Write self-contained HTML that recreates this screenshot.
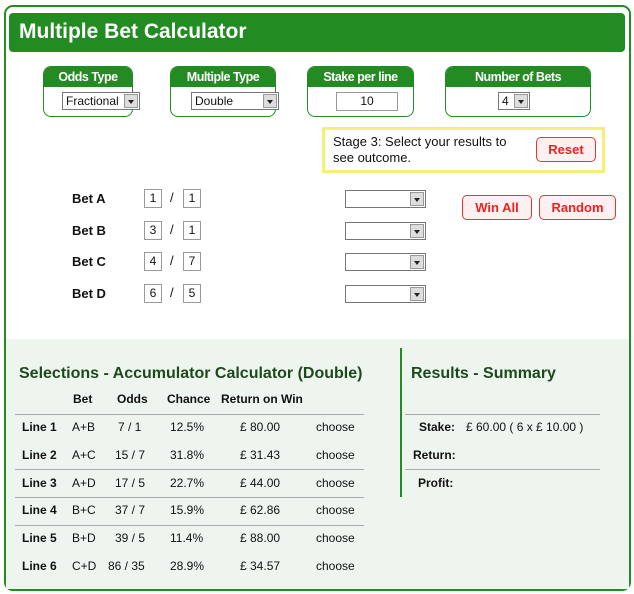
<!DOCTYPE html>
<html><head><style>
*{margin:0;padding:0;box-sizing:border-box}
body{width:634px;height:594px;background:#fff;font-family:"Liberation Sans",sans-serif;position:relative;overflow:hidden;font-size:13px;color:#111}
.a{position:absolute}
#outer{left:4px;top:5px;width:627px;height:586px;border:2px solid #228b22;border-radius:9px;overflow:hidden}
#hdr{left:9px;top:13px;width:616px;height:39px;background:#228b22;border-radius:4px;color:#fff;font-size:21px;font-weight:bold;padding:7px 0 0 10px}
#low{left:6px;top:339px;width:623px;height:250px;background:#eef5ee}
.box{border:1px solid #228b22;border-radius:8px;background:#fff;overflow:hidden}
.box .h{background:#228b22;color:#fff;font-weight:bold;font-size:12.5px;text-align:center;height:20px;line-height:20px;letter-spacing:-0.5px}
.sel{position:absolute;height:18px;border:1px solid #777;background:#fff;font-size:12px;line-height:16px;padding-left:3px}
.sel i{position:absolute;right:1px;top:1px;width:14px;height:14px;background:#ddd;border:1px solid #999}
.sel i:after{content:"";position:absolute;left:3px;top:5px;border-left:3.5px solid transparent;border-right:3.5px solid transparent;border-top:4px solid #222}
.inp{position:absolute;width:18px;height:19px;border:1px solid #999;background:#fff;font-size:12px;text-align:center;line-height:17px}
.btn{position:absolute;height:25px;border:1px solid #e33;border-radius:5px;background:#fdf0f0;color:#e22;font-weight:bold;font-size:13px;text-align:center;line-height:23px}
.bl{font-weight:bold;font-size:13px}
.t{position:absolute;font-size:12px}
.b{font-weight:bold}
.ln{position:absolute;height:1px;background:#aaa}
</style></head><body>
<div id="outer" class="a"></div>
<div id="low" class="a"></div>
<div id="hdr" class="a">Multiple Bet Calculator</div>

<div class="a box" style="left:43px;top:66px;width:90px;height:51px"><div class="h">Odds Type</div></div>
<div class="sel" style="left:62px;top:92px;width:78px">Fractional<i></i></div>
<div class="a box" style="left:170px;top:66px;width:106px;height:51px"><div class="h">Multiple Type</div></div>
<div class="sel" style="left:191px;top:92px;width:88px">Double<i></i></div>
<div class="a box" style="left:307px;top:66px;width:107px;height:51px"><div class="h">Stake per line</div></div>
<div class="a" style="left:336px;top:92px;width:62px;height:19px;border:1px solid #999;background:#fff;text-align:center;font-size:12px;line-height:17px">10</div>
<div class="a box" style="left:445px;top:66px;width:146px;height:51px"><div class="h">Number of Bets</div></div>
<div class="sel" style="left:498px;top:92px;width:32px">4<i></i></div>

<div class="a" style="left:322px;top:127px;width:283px;height:46px;border:3px solid #f5f075;background:#fff;font-size:13px;line-height:16px;padding:4px 0 0 8px">Stage 3: Select your results to<br>see outcome.</div>
<div class="btn" style="left:536px;top:137px;width:60px">Reset</div>

<div class="a bl" style="left:72px;top:191px">Bet A</div>
<div class="a bl" style="left:72px;top:223px">Bet B</div>
<div class="a bl" style="left:72px;top:254px">Bet C</div>
<div class="a bl" style="left:72px;top:286px">Bet D</div>
<div class="inp" style="left:144px;top:189px">1</div><div class="a" style="left:170px;top:190px">/</div><div class="inp" style="left:183px;top:189px">1</div>
<div class="inp" style="left:144px;top:221px">3</div><div class="a" style="left:170px;top:222px">/</div><div class="inp" style="left:183px;top:221px">1</div>
<div class="inp" style="left:144px;top:252px">4</div><div class="a" style="left:170px;top:253px">/</div><div class="inp" style="left:183px;top:252px">7</div>
<div class="inp" style="left:144px;top:284px">6</div><div class="a" style="left:170px;top:285px">/</div><div class="inp" style="left:183px;top:284px">5</div>
<div class="sel" style="left:345px;top:190px;width:81px"><i></i></div>
<div class="sel" style="left:345px;top:222px;width:81px"><i></i></div>
<div class="sel" style="left:345px;top:253px;width:81px"><i></i></div>
<div class="sel" style="left:345px;top:285px;width:81px"><i></i></div>
<div class="btn" style="left:462px;top:195px;width:70px">Win All</div>
<div class="btn" style="left:539px;top:195px;width:77px">Random</div>

<div class="a" style="left:19px;top:365px;font-size:16px;font-weight:bold;color:#1d4a1d">Selections - Accumulator Calculator (Double)</div>
<div class="a" style="left:411px;top:365px;font-size:16px;font-weight:bold;color:#1d4a1d">Results - Summary</div>
<div class="a" style="left:400px;top:348px;width:2px;height:149px;background:#228b22"></div>

<div class="t b" style="left:73px;top:392px">Bet</div>
<div class="t b" style="left:117px;top:392px">Odds</div>
<div class="t b" style="left:167px;top:392px">Chance</div>
<div class="t b" style="left:221px;top:392px">Return on Win</div>
<div class="ln" style="left:15px;top:414px;width:349px"></div>
<div class="ln" style="left:15px;top:469px;width:349px"></div>
<div class="ln" style="left:15px;top:497px;width:349px"></div>
<div class="ln" style="left:15px;top:525px;width:349px"></div>

<div class="t b" style="left:22px;top:420px">Line 1</div><div class="t" style="left:72px;top:420px">A+B</div><div class="t" style="left:118px;top:420px">7 / 1</div><div class="t" style="left:170px;top:420px">12.5%</div><div class="t" style="left:240px;top:420px">£ 80.00</div><div class="t" style="left:316px;top:420px">choose</div>
<div class="t b" style="left:22px;top:448px">Line 2</div><div class="t" style="left:72px;top:448px">A+C</div><div class="t" style="left:115px;top:448px">15 / 7</div><div class="t" style="left:170px;top:448px">31.8%</div><div class="t" style="left:240px;top:448px">£ 31.43</div><div class="t" style="left:316px;top:448px">choose</div>
<div class="t b" style="left:22px;top:476px">Line 3</div><div class="t" style="left:72px;top:476px">A+D</div><div class="t" style="left:115px;top:476px">17 / 5</div><div class="t" style="left:170px;top:476px">22.7%</div><div class="t" style="left:240px;top:476px">£ 44.00</div><div class="t" style="left:316px;top:476px">choose</div>
<div class="t b" style="left:22px;top:503px">Line 4</div><div class="t" style="left:72px;top:503px">B+C</div><div class="t" style="left:115px;top:503px">37 / 7</div><div class="t" style="left:170px;top:503px">15.9%</div><div class="t" style="left:240px;top:503px">£ 62.86</div><div class="t" style="left:316px;top:503px">choose</div>
<div class="t b" style="left:22px;top:531px">Line 5</div><div class="t" style="left:72px;top:531px">B+D</div><div class="t" style="left:115px;top:531px">39 / 5</div><div class="t" style="left:170px;top:531px">11.4%</div><div class="t" style="left:240px;top:531px">£ 88.00</div><div class="t" style="left:316px;top:531px">choose</div>
<div class="t b" style="left:22px;top:559px">Line 6</div><div class="t" style="left:72px;top:559px">C+D</div><div class="t" style="left:108px;top:559px">86 / 35</div><div class="t" style="left:170px;top:559px">28.9%</div><div class="t" style="left:240px;top:559px">£ 34.57</div><div class="t" style="left:316px;top:559px">choose</div>

<div class="ln" style="left:405px;top:414px;width:195px"></div>
<div class="ln" style="left:405px;top:469px;width:195px"></div>
<div class="t b" style="left:419px;top:420px">Stake:</div><div class="t" style="left:466px;top:420px">£ 60.00 ( 6 x £ 10.00 )</div>
<div class="t b" style="left:413px;top:448px">Return:</div>
<div class="t b" style="left:418px;top:476px">Profit:</div>
</body></html>
